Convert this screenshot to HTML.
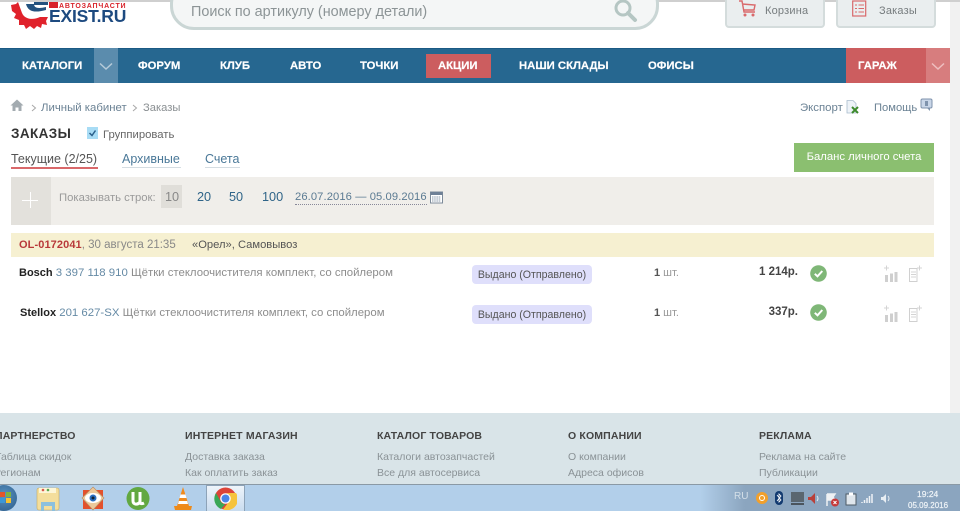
<!DOCTYPE html>
<html lang="ru">
<head>
<meta charset="utf-8">
<title>Заказы</title>
<style>
html,body{margin:0;padding:0;background:#fff}
body{position:relative;width:960px;height:511px;overflow:hidden;font-family:"Liberation Sans","Noto Sans CJK SC",sans-serif;font-size:11px;color:#777}
#w{position:absolute;left:0;top:0;width:960px;height:511px;overflow:hidden;filter:blur(.3px)}
.a{position:absolute;white-space:nowrap}
.box{position:absolute}
.nav{font-weight:bold;color:#fff;font-size:11.3px;top:58.5px;line-height:14px;-webkit-text-stroke:.2px #fff}
.ft{font-weight:bold;color:#444;font-size:10.5px;top:430px;line-height:13px;letter-spacing:.15px}
.fl{color:#8a9296;font-size:10.5px;line-height:13px}
.badge{position:absolute;left:472px;width:120px;height:19px;background:#dfdffb;border-radius:4px;color:#555;font-size:10.6px;line-height:20px;text-align:center}
</style>
</head>
<body>
<div id="w">
<div class="box" style="left:950px;top:0;width:10px;height:413px;background:#f1f1f1"></div>
<div class="box" style="left:0;top:0;width:960px;height:2px;background:#cfcfcf"></div>

<!-- logo -->
<svg class="box" style="left:10px;top:0" width="40" height="30" viewBox="0 0 40 30">
<path d="M1 5 L6 4 L8 2 L12 13 C15 20 24 20 30 17 L38 17 L36 21 L37 25 L32 24 L31 28 L27 26 L24 29 L20 26 L16 29 L14 25 L9 25 L9 20 L4 18 L6 14 L2 11 Z" fill="#e0222b"/>
<path d="M16 4 C18 12 25 13 36 10 L36 7 C28 9 24 8 24 4 Z" fill="#24527f"/>
<rect x="24" y="2" width="14" height="3" fill="#24527f"/>
</svg>
<div class="box" style="left:49px;top:2px;width:9px;height:6px;background:#d8232a"></div>
<div class="a" style="left:59px;top:2.5px;font-size:7px;line-height:8px;font-weight:bold;color:#d8232a;letter-spacing:.8px">АВТОЗАПЧАСТИ</div>
<div class="a" style="left:49px;top:7.5px;font-size:17.5px;line-height:17px;font-weight:bold;color:#1d4a80;letter-spacing:-.2px">EXIST.RU</div>

<!-- search -->
<div class="box" style="left:170px;top:-20px;width:483px;height:44px;border:3px solid #cad6d5;border-radius:24px;background:#f4f6f6"></div>
<div class="a" style="left:191px;top:2.5px;font-size:14.4px;line-height:18px;color:#8c9496">Поиск по артикулу (номеру детали)</div>
<svg class="box" style="left:612px;top:0" width="28" height="24" viewBox="0 0 28 24"><circle cx="11" cy="8" r="7" fill="none" stroke="#b5c6c3" stroke-width="3"/><path d="M16 13 L23 20" stroke="#b5c6c3" stroke-width="4" stroke-linecap="round"/></svg>

<!-- top buttons -->
<div class="box" style="left:725px;top:-6px;width:96px;height:30px;background:#eaeeef;border:2px solid #d4dcdc;border-radius:4px"></div>
<div class="box" style="left:836px;top:-6px;width:96px;height:30px;background:#eaeeef;border:2px solid #d4dcdc;border-radius:4px"></div>
<svg class="box" style="left:738px;top:0" width="20" height="18" viewBox="0 0 20 18"><path d="M1 1 L4 1 L6 12 L17 12 M4 4 L17 5 L16 10 L5 10" fill="none" stroke="#d9696b" stroke-width="1.4"/><circle cx="7" cy="15" r="1.5" fill="#d9696b"/><circle cx="15" cy="15" r="1.5" fill="#d9696b"/></svg>
<svg class="box" style="left:852px;top:0" width="15" height="18" viewBox="0 0 15 18"><rect x=".7" y="1" width="13" height="15" fill="none" stroke="#d9696b" stroke-width="1.2"/><path d="M3 5 H5 M6.500 5 H12 M3 8.500 H5 M6.500 8.500 H12 M3 12 H5 M6.500 12 H12" stroke="#d9696b" stroke-width="1"/></svg>
<div class="a" style="left:765px;top:3.5px;font-size:11px;line-height:14px;color:#767c7e;letter-spacing:.2px">Корзина</div>
<div class="a" style="left:879px;top:3.5px;font-size:11px;line-height:14px;color:#767c7e;letter-spacing:.2px">Заказы</div>

<!-- nav -->
<div class="box" style="left:0;top:48px;width:950px;height:35px;background:#266790;border-top:1px solid #1b5a84;box-sizing:border-box"></div>
<div class="box" style="left:94px;top:48px;width:24px;height:35px;background:#5b8cad"></div>
<svg class="box" style="left:98px;top:62px" width="16" height="9" viewBox="0 0 16 9"><path d="M2 1.500 L8 7 L14 1.500" fill="none" stroke="#b6cbd9" stroke-width="1.5"/></svg>
<div class="a nav" style="left:22px">КАТАЛОГИ</div>
<div class="a nav" style="left:138px">ФОРУМ</div>
<div class="a nav" style="left:220px">КЛУБ</div>
<div class="a nav" style="left:290px">АВТО</div>
<div class="a nav" style="left:360px">ТОЧКИ</div>
<div class="box" style="left:426px;top:54px;width:65px;height:24px;background:#cc5d5f"></div>
<div class="a nav" style="left:438px">АКЦИИ</div>
<div class="a nav" style="left:519px">НАШИ СКЛАДЫ</div>
<div class="a nav" style="left:648px">ОФИСЫ</div>
<div class="box" style="left:846px;top:48px;width:80px;height:35px;background:#cc5d5f"></div>
<div class="box" style="left:926px;top:48px;width:24px;height:35px;background:#d77d7e"></div>
<svg class="box" style="left:930px;top:62px" width="16" height="9" viewBox="0 0 16 9"><path d="M2 1.500 L8 7 L14 1.500" fill="none" stroke="#eebfc0" stroke-width="1.5"/></svg>
<div class="a nav" style="left:858px">ГАРАЖ</div>

<!-- breadcrumbs -->
<svg class="box" style="left:10px;top:99px" width="14" height="13" viewBox="0 0 14 13"><path d="M7 .5 L13.500 6.500 L11.500 6.500 L11.500 12 L8.500 12 L8.500 8.500 L5.500 8.500 L5.500 12 L2.500 12 L2.500 6.500 L.5 6.500 Z" fill="#a3abb0"/></svg>
<svg class="box" style="left:31px;top:104px" width="6" height="8" viewBox="0 0 6 8"><path d="M1 1 L4.500 4 L1 7" fill="none" stroke="#a8a8a8"/></svg>
<div class="a" style="left:41px;top:100.500px;font-size:11.4px;line-height:14px;color:#6b8294">Личный кабинет</div>
<svg class="box" style="left:132px;top:104px" width="6" height="8" viewBox="0 0 6 8"><path d="M1 1 L4.500 4 L1 7" fill="none" stroke="#a8a8a8"/></svg>
<div class="a" style="left:143px;top:100.500px;font-size:11.2px;line-height:14px;color:#8a8f92">Заказы</div>

<div class="a" style="left:800px;top:100.500px;font-size:11.4px;line-height:14px;color:#6b8294">Экспорт</div>
<svg class="box" style="left:846px;top:100px" width="14" height="14" viewBox="0 0 14 14"><path d="M1 .5 H7 L10 3.500 V13 H1 Z" fill="#eef3f8" stroke="#a9bccd" stroke-width=".8"/><path d="M6 7 L12 13 M12 7 L6 13" stroke="#3d8a2c" stroke-width="2"/></svg>
<div class="a" style="left:874px;top:100.500px;font-size:11.2px;line-height:14px;color:#6b8294">Помощь</div>
<svg class="box" style="left:920px;top:98px" width="14" height="14" viewBox="0 0 14 14"><rect x="1" y="1" width="11" height="9" rx="1.500" fill="#c9d6e8" stroke="#7f93ad"/><path d="M7 10 L10 13 L10 10 Z" fill="#7f93ad"/><rect x="5" y="3" width="3" height="5" fill="#7f93ad"/></svg>

<!-- title -->
<div class="a" style="left:11px;top:125.500px;font-size:13.500px;line-height:16px;font-weight:bold;color:#333;letter-spacing:.4px">ЗАКАЗЫ</div>
<div class="box" style="left:87px;top:127px;width:11px;height:12px;background:#a8dcf5"></div>
<svg class="box" style="left:87px;top:127px" width="11" height="12" viewBox="0 0 11 12"><path d="M2.500 6 L5 8.500 L8.500 3.500" fill="none" stroke="#2a5f8a" stroke-width="1.500"/></svg>
<div class="a" style="left:103px;top:127.500px;font-size:11.3px;line-height:14px;color:#666">Группировать</div>

<!-- tabs -->
<div class="a" style="left:11px;top:151.500px;font-size:12.500px;line-height:15px;color:#555">Текущие (2/25)</div>
<div class="box" style="left:11px;top:167px;width:87px;height:2px;background:#d9686a"></div>
<div class="a" style="left:122px;top:151.500px;font-size:12.500px;line-height:15px;color:#4a7898">Архивные</div>
<div class="box" style="left:122px;top:167px;width:59px;height:1px;background:#d5dde2"></div>
<div class="a" style="left:205px;top:151.500px;font-size:12.500px;line-height:15px;color:#4a7898">Счета</div>
<div class="box" style="left:205px;top:167px;width:35px;height:1px;background:#d5dde2"></div>

<div class="box" style="left:794px;top:143px;width:140px;height:29px;background:#8bbf70;color:#fff;font-size:11.300px;line-height:29px;text-align:center">Баланс личного счета</div>

<!-- toolbar -->
<div class="box" style="left:11px;top:177px;width:923px;height:48px;background:#f0eeea"></div>
<div class="box" style="left:11px;top:177px;width:40px;height:48px;background:#e3e1dc"></div>
<div class="box" style="left:22px;top:200px;width:16px;height:1px;background:#fff"></div>
<div class="box" style="left:29.500px;top:192px;width:1px;height:16px;background:#fff"></div>
<div class="a" style="left:59px;top:191px;font-size:11.3px;line-height:14px;color:#9a9a9a">Показывать строк:</div>
<div class="box" style="left:161px;top:185px;width:21px;height:23px;background:#e0ded9"></div>
<div class="a" style="left:165px;top:190px;font-size:12.700px;line-height:14px;color:#888">10</div>
<div class="a" style="left:197px;top:190px;font-size:12.700px;line-height:14px;color:#2f6488">20</div>
<div class="a" style="left:229px;top:190px;font-size:12.700px;line-height:14px;color:#2f6488">50</div>
<div class="a" style="left:262px;top:190px;font-size:12.700px;line-height:14px;color:#2f6488">100</div>
<div class="a" style="left:295px;top:190px;font-size:11.2px;line-height:14px;color:#5a7a92;border-bottom:1px dotted #889;letter-spacing:.1px">26.07.2016 — 05.09.2016</div>
<svg class="box" style="left:430px;top:191px" width="13" height="13" viewBox="0 0 13 13"><rect x=".5" y="1" width="12" height="11" fill="#fff" stroke="#7c8a99"/><rect x=".5" y="1" width="12" height="3" fill="#6f8197"/><path d="M2 6 H11 M2 8 H11 M2 10 H11" stroke="#8898aa" stroke-dasharray="1.500 .7"/></svg>

<!-- order -->
<div class="box" style="left:11px;top:233px;width:923px;height:24px;background:#f6f0d1"></div>
<div class="a" style="left:19px;top:238px;font-size:11.500px;line-height:14px;color:#888"><b style="color:#b8393a;font-size:11px;letter-spacing:.1px">OL-0172041</b>, 30 августа 21:35</div>
<div class="a" style="left:192px;top:238px;font-size:11.200px;line-height:14px;color:#555">«Орел», Самовывоз</div>

<div class="a" style="left:19px;top:266px;font-size:11.400px;line-height:14px;color:#8d8d8d"><b style="color:#222;font-size:11px">Bosch</b> <span style="color:#658aa5">3 397 118 910</span> Щётки стеклоочистителя комплект, со спойлером</div>
<div class="a" style="left:20px;top:306px;font-size:11.400px;line-height:14px;color:#8d8d8d"><b style="color:#222;font-size:11px">Stellox</b> <span style="color:#658aa5">201 627-SX</span> Щётки стеклоочистителя комплект, со спойлером</div>
<div class="badge" style="top:265px">Выдано (Отправлено)</div>
<div class="badge" style="top:305px">Выдано (Отправлено)</div>
<div class="a" style="left:654px;top:266px;font-size:11px;line-height:14px;color:#999"><b style="color:#555">1</b> шт.</div>
<div class="a" style="left:654px;top:306px;font-size:11px;line-height:14px;color:#999"><b style="color:#555">1</b> шт.</div>
<div class="a" style="right:162px;top:265px;font-size:11.500px;line-height:14px;font-weight:bold;color:#444">1 214р.</div>
<div class="a" style="right:162px;top:305px;font-size:11.500px;line-height:14px;font-weight:bold;color:#444">337р.</div>
<svg class="box" style="left:810px;top:265px" width="17" height="17" viewBox="0 0 17 17"><circle cx="8.500" cy="8.500" r="8.300" fill="#7fb777"/><path d="M4.800 8.800 L7.500 11.300 L12.300 6" fill="none" stroke="#fff" stroke-width="2"/></svg>
<svg class="box" style="left:810px;top:304px" width="17" height="17" viewBox="0 0 17 17"><circle cx="8.500" cy="8.500" r="8.300" fill="#7fb777"/><path d="M4.800 8.800 L7.500 11.300 L12.300 6" fill="none" stroke="#fff" stroke-width="2"/></svg>
<svg class="box" style="left:884px;top:265px" width="40" height="18" viewBox="0 0 40 18"><path d="M0 3 H5 M2.500 .5 V5.500" stroke="#d4d4d4"/><rect x="1" y="10" width="3" height="7" fill="#cfcfcf"/><rect x="6" y="8.500" width="3" height="8.500" fill="#cfcfcf"/><rect x="10.500" y="7" width="3" height="10" fill="#cfcfcf"/><path d="M25.500 3.500 H33 V16.500 H25.500 Z" fill="none" stroke="#d0d0d0"/><path d="M27 7 H32 M27 9.500 H32 M27 12 H32" stroke="#d4d4d4"/><path d="M33 3 H38 M35.500 .5 V5.500" stroke="#d4d4d4"/></svg>
<svg class="box" style="left:884px;top:305px" width="40" height="18" viewBox="0 0 40 18"><path d="M0 3 H5 M2.500 .5 V5.500" stroke="#d4d4d4"/><rect x="1" y="10" width="3" height="7" fill="#cfcfcf"/><rect x="6" y="8.500" width="3" height="8.500" fill="#cfcfcf"/><rect x="10.500" y="7" width="3" height="10" fill="#cfcfcf"/><path d="M25.500 3.500 H33 V16.500 H25.500 Z" fill="none" stroke="#d0d0d0"/><path d="M27 7 H32 M27 9.500 H32 M27 12 H32" stroke="#d4d4d4"/><path d="M33 3 H38 M35.500 .5 V5.500" stroke="#d4d4d4"/></svg>

<!-- footer -->
<div class="box" style="left:0;top:413px;width:960px;height:71px;background:#d9e4e8"></div>
<div class="a ft" style="left:-5px;top:430px">ПАРТНЕРСТВО</div>
<div class="a ft" style="left:185px;top:430px">ИНТЕРНЕТ МАГАЗИН</div>
<div class="a ft" style="left:377px;top:430px">КАТАЛОГ ТОВАРОВ</div>
<div class="a ft" style="left:568px;top:430px">О КОМПАНИИ</div>
<div class="a ft" style="left:759px;top:430px">РЕКЛАМА</div>
<div class="a fl" style="left:-5px;top:451px">Таблица скидок</div>
<div class="a fl" style="left:-6px;top:467px">Регионам</div>
<div class="a fl" style="left:185px;top:451px">Доставка заказа</div>
<div class="a fl" style="left:185px;top:467px">Как оплатить заказ</div>
<div class="a fl" style="left:377px;top:451px">Каталоги автозапчастей</div>
<div class="a fl" style="left:377px;top:467px">Все для автосервиса</div>
<div class="a fl" style="left:568px;top:451px">О компании</div>
<div class="a fl" style="left:568px;top:467px">Адреса офисов</div>
<div class="a fl" style="left:759px;top:451px">Реклама на сайте</div>
<div class="a fl" style="left:759px;top:467px">Публикации</div>

<!-- taskbar -->
<div class="box" style="left:0;top:484px;width:960px;height:27px;background:linear-gradient(90deg,#b2cfea 0,#b2cfea 700px,#8ba5bf 745px,#8ba5bf 100%);border-top:1px solid #8a99a5;box-sizing:border-box"></div>
<div class="box" style="left:-9px;top:485px;width:26px;height:26px;border-radius:50%;background:radial-gradient(circle at 50% 40%,#5a94c4,#2c5a86)"></div>
<svg class="box" style="left:0;top:491px" width="13" height="14" viewBox="0 0 13 14"><rect x="0" y="1" width="5" height="5" fill="#e2552b"/><rect x="6" y="1" width="5" height="5" fill="#7db343"/><rect x="0" y="7" width="5" height="5" fill="#3c97d6"/><rect x="6" y="7" width="5" height="5" fill="#f5c22f"/></svg>
<svg class="box" style="left:36px;top:487px" width="26" height="24" viewBox="0 0 26 24"><rect x="1" y="1" width="22" height="22" rx="2" fill="#f4de9c" stroke="#c9ac60" stroke-width=".6"/><rect x="3" y="1" width="17" height="5" fill="#fdf6d8"/><circle cx="7" cy="3" r="1.300" fill="#d9574a"/><circle cx="12" cy="3" r="1.300" fill="#58a84e"/><path d="M5 15 H19 V24 H16 V19 H8 V24 H5 Z" fill="#8cc0dd"/></svg>
<svg class="box" style="left:81px;top:486px" width="24" height="25" viewBox="0 0 24 25"><rect x="2" y="4" width="20" height="19" fill="#e2512d"/><path d="M12 1 L23 12 L12 24 L1 12 Z" fill="#ecc89a" stroke="#b88a5f" stroke-width=".6"/><ellipse cx="12" cy="12" rx="8" ry="5" fill="#fff"/><circle cx="12" cy="12" r="3.500" fill="#2a6fc0"/><circle cx="12" cy="12" r="1.500" fill="#123"/></svg>
<svg class="box" style="left:126px;top:486px" width="24" height="25" viewBox="0 0 24 25"><circle cx="12" cy="12.500" r="11.500" fill="#62a841"/><path d="M7 6 V15 C7 19 12 19 14 16 M14 6 V16 C14 18 16 18 18 17" fill="none" stroke="#fff" stroke-width="3"/></svg>
<svg class="box" style="left:173px;top:486px" width="20" height="25" viewBox="0 0 20 25"><path d="M10 1 L16 20 H4 Z" fill="#f08a1d"/><path d="M7.500 8.500 H12.500 L13.500 12 H6.500 Z" fill="#fff"/><path d="M5.800 15 H14.200 L15 18 H5 Z" fill="#fff"/><path d="M1 20 H19 L18 24 H2 Z" fill="#ed8a19"/></svg>
<div class="box" style="left:206px;top:485px;width:39px;height:26px;background:linear-gradient(#eef4fa,#c9dcef);border:1px solid #8da3b8;border-bottom:0;box-sizing:border-box"></div>
<svg class="box" style="left:214px;top:487px" width="23" height="23" viewBox="0 0 23 23"><circle cx="11.500" cy="11.500" r="11" fill="#dd4438"/><path d="M2 6 L7 15 A5 5 0 0 0 11.500 17 L7 22 A11 11 0 0 1 2 6 Z" fill="#3aa757"/><path d="M11.500 6 H22 A11 11 0 0 1 9 22.500 L15.500 14 A5 5 0 0 0 11.500 6 Z" fill="#f6c33c"/><circle cx="11.500" cy="11.500" r="5.300" fill="#fff"/><circle cx="11.500" cy="11.500" r="4" fill="#4a85e8"/></svg>
<div class="a" style="left:734px;top:491px;font-size:10px;line-height:12px;color:#d4dfe8">RU</div>
<div class="box" style="left:756px;top:492px;width:12px;height:12px;border-radius:50%;background:#f2a02c"></div>
<div class="box" style="left:759px;top:495px;width:6px;height:6px;border-radius:50%;border:1px solid #fff;box-sizing:border-box"></div>
<div class="box" style="left:775px;top:491px;width:8px;height:14px;border-radius:4px;background:#123a70"></div>
<svg class="box" style="left:775px;top:491px" width="8" height="14" viewBox="0 0 8 14"><path d="M2 4 L6 9 L4 11 V3 L6 5 L2 10" fill="none" stroke="#fff" stroke-width=".8"/></svg>
<div class="box" style="left:791px;top:492px;width:13px;height:10px;background:#5a6670"></div>
<div class="box" style="left:791px;top:503px;width:13px;height:2px;background:#4b555e"></div>
<svg class="box" style="left:807px;top:492px" width="14" height="13" viewBox="0 0 14 13"><path d="M1 5 H4 L8 1 V12 L4 8 H1 Z" fill="#b9403a"/><path d="M10 4 Q12 6.500 10 9" fill="none" stroke="#e8eef2"/></svg>
<svg class="box" style="left:825px;top:493px" width="15" height="14" viewBox="0 0 15 14"><path d="M2 1 V13 M2 1 H10 L8 4 L10 7 H2" fill="#eef1f4" stroke="#eef1f4" stroke-width="1.500"/><circle cx="10" cy="9.500" r="4" fill="#c63a3a"/><path d="M8.500 8 L11.500 11 M11.500 8 L8.500 11" stroke="#fff"/></svg>
<svg class="box" style="left:845px;top:492px" width="13" height="14" viewBox="0 0 13 14"><rect x="1" y="2" width="10" height="11" fill="#dfe6ec" stroke="#4d5b66"/><rect x="4" y="0.500" width="4" height="3" fill="#fff"/></svg>
<svg class="box" style="left:861px;top:493px" width="13" height="11" viewBox="0 0 13 11"><path d="M1 9 V10 M3.500 7 V10 M6 5 V10 M8.500 3 V10 M11 1 V10" stroke="#eef2f6" stroke-width="1.500"/></svg>
<svg class="box" style="left:880px;top:492px" width="12" height="13" viewBox="0 0 12 13"><path d="M1 5 H3 L6 2 V11 L3 8 H1 Z" fill="#e8eef3"/><path d="M8 4 Q10 6.500 8 9" fill="none" stroke="#e8eef3"/></svg>
<div class="a" style="left:917px;top:489px;font-size:8.500px;line-height:10px;color:#eef3f7;-webkit-text-stroke:.2px #eef3f7">19:24</div>
<div class="a" style="left:908px;top:500.500px;font-size:8px;line-height:10px;color:#eef3f7;-webkit-text-stroke:.2px #eef3f7">05.09.2016</div>
</div>
</body>
</html>
